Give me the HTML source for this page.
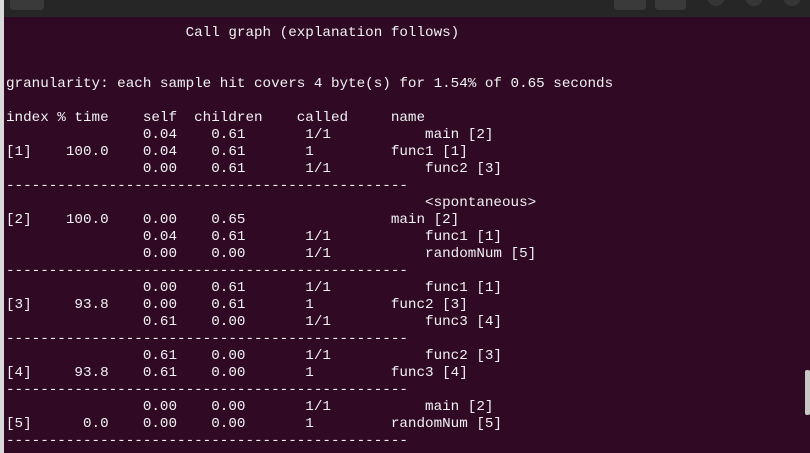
<!DOCTYPE html>
<html><head><meta charset="utf-8"><style>
html,body{margin:0;padding:0;width:810px;height:453px;overflow:hidden;background:#300a24;}
.top{position:absolute;left:0;top:0;width:810px;height:17px;background:#262626;}
.btn{position:absolute;top:-6px;height:16px;background:#3a3a3a;border-radius:4px;}
.circ{position:absolute;top:-12px;width:18px;height:18px;border-radius:50%;background:#363636;}
.left{position:absolute;left:0;top:0;width:4px;height:453px;background:#d9d9d9;}
.scroll{position:absolute;left:805px;top:370px;width:5px;height:45px;background:#c8c8c8;border-radius:2px;}
pre{position:absolute;left:6px;top:25px;margin:0;font-family:"Liberation Mono",monospace;font-size:14.25px;line-height:17px;color:#f2f2f2;white-space:pre;}
</style></head><body>
<div class="top">
<div class="btn" style="left:10px;width:34px"></div>
<div class="btn" style="left:614px;width:32px"></div>
<div class="btn" style="left:655px;width:31px"></div>
<div class="circ" style="left:707px"></div>
<div class="circ" style="left:745px"></div>
<div class="circ" style="left:783px"></div>
</div>
<div class="left"></div>
<div class="scroll"></div>
<pre>                     Call graph (explanation follows)


granularity: each sample hit covers 4 byte(s) for 1.54% of 0.65 seconds

index % time    self  children    called     name
                0.04    0.61       1/1           main [2]
[1]    100.0    0.04    0.61       1         func1 [1]
                0.00    0.61       1/1           func2 [3]
-----------------------------------------------
                                                 &lt;spontaneous&gt;
[2]    100.0    0.00    0.65                 main [2]
                0.04    0.61       1/1           func1 [1]
                0.00    0.00       1/1           randomNum [5]
-----------------------------------------------
                0.00    0.61       1/1           func1 [1]
[3]     93.8    0.00    0.61       1         func2 [3]
                0.61    0.00       1/1           func3 [4]
-----------------------------------------------
                0.61    0.00       1/1           func2 [3]
[4]     93.8    0.61    0.00       1         func3 [4]
-----------------------------------------------
                0.00    0.00       1/1           main [2]
[5]      0.0    0.00    0.00       1         randomNum [5]
-----------------------------------------------</pre>
</body></html>
